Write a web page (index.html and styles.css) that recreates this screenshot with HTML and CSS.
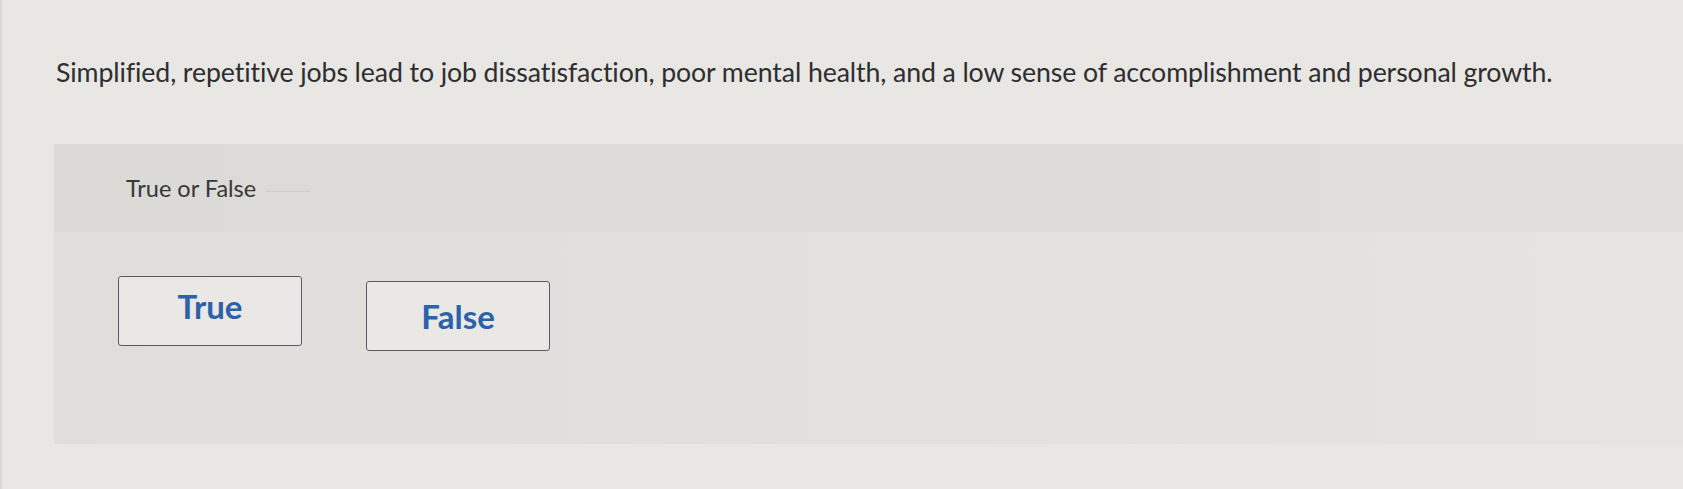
FILE: index.html
```html
<!DOCTYPE html>
<html lang="en">
<head>
    <meta charset="UTF-8">
    <meta name="viewport" content="width=device-width, initial-scale=1.0">
    <title>True or False</title>
    <link rel="stylesheet" href="styles.css">
</head>
<body>
    <div class="page">
        <p class="question">Simplified, repetitive jobs lead to job dissatisfaction, poor mental health, and a low sense of accomplishment and personal growth.</p>

        <div class="answer-box">
            <div class="answer-head">
                <span class="answer-type">True or False</span>
                <span class="answer-rule"></span>
            </div>
            <div class="choices">
                <button class="choice">True</button>
                <button class="choice choice-low">False</button>
            </div>
        </div>
    </div>
</body>
</html>
```

FILE: styles.css
```css
body {
    font-family: Lato, "Liberation Sans", Arial, sans-serif;
    background-color: #e8e7e3;
    margin: 0;
    padding: 0;
    color: #2e2d30;
}

.page {
    height: 489px;
    overflow: hidden;
    border-left: 2px solid #d9d8d4;
    box-sizing: border-box;
}

.question {
    margin: 0;
    padding: 55px 0 0 54px;
    font-size: 26.7px;
    line-height: 34px;
    letter-spacing: -0.1px;
}

.answer-box {
    margin: 55px 0 0 52px;
    height: 300px;
    background: linear-gradient(90deg, #dfdedb 0%, #e2e1dd 60%, #e5e4e0 100%);
}

.answer-head {
    height: 88px;
    padding-left: 72px;
    display: flex;
    align-items: center;
    gap: 10px;
    background: linear-gradient(90deg, #dbdad6 0%, #dddcd8 60%, #e0dfdb 100%);
}

.answer-type {
    font-size: 23.5px;
    color: #38373a;
}

.answer-rule {
    width: 44px;
    height: 1px;
    margin-top: 6px;
    background-color: #cfcecb;
}

.choices {
    display: flex;
    align-items: flex-start;
    gap: 64px;
    padding: 44px 0 0 64px;
}

.choice {
    width: 184px;
    height: 70px;
    background-color: #e9e8e5;
    border: 1.5px solid #575a6c;
    border-radius: 3px;
    font-family: inherit;
    font-size: 33px;
    font-weight: bold;
    color: #2c62aa;
    padding: 0 0 10px;
}

.choice-low {
    margin-top: 5px;
    padding-bottom: 0;
}
```
